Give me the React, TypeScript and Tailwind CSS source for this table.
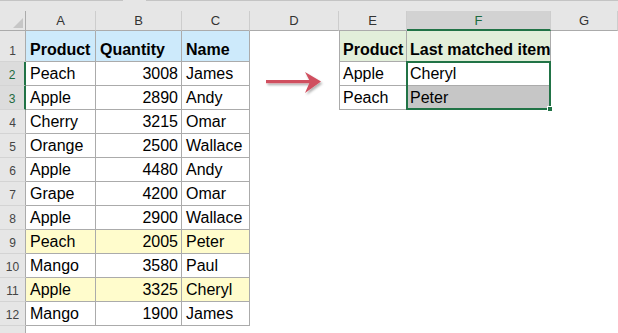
const rows: [string, number, string][] = [
  ["Peach", 3008, "James"],
  ["Apple", 2890, "Andy"],
  ["Cherry", 3215, "Omar"],
  ["Orange", 2500, "Wallace"],
  ["Apple", 4480, "Andy"],
  ["Grape", 4200, "Omar"],
  ["Apple", 2900, "Wallace"],
  ["Peach", 2005, "Peter"],
  ["Mango", 3580, "Paul"],
  ["Apple", 3325, "Cheryl"],
  ["Mango", 1900, "James"],
];

const lookup: [string, string][] = [
  ["Apple", "Cheryl"],
  ["Peach", "Peter"],
];

const cols = ["A", "B", "C", "D", "E", "F", "G"];

function Arrow() {
  return (
    <svg width="64" height="30" viewBox="0 0 64 30" className="absolute left-[12px] top-[6px] z-10 overflow-visible">
      <defs>
        <filter id="sh" x="-20%" y="-40%" width="150%" height="200%">
          <feDropShadow dx="1.5" dy="2" stdDeviation="1.2" floodColor="#000" floodOpacity="0.3" />
        </filter>
      </defs>
      <g filter="url(#sh)" fill="#d04f5f">
        <rect x="4" y="12" width="46" height="3.2" />
        <polygon points="43,4 59,13.6 43,25 48,13.6" />
      </g>
    </svg>
  );
}

function RowHead({ n, sel, h }: { n: number; sel?: boolean; h: string }) {
  return (
    <div
      className={`${h} flex items-end justify-center pb-[4px] text-[12px] leading-none border-b border-[#d4d4d4] ${
        sel ? "bg-[#dcdcdc] text-[#1e6b40] border-r-2 border-r-[#217346]" : "bg-[#e6e6e6] text-[#444] border-r border-r-[#ababab]"
      }`}
    >
      {n}
    </div>
  );
}

export default function App() {
  const cell = "flex items-end pb-[3.5px] leading-none text-[16px] text-black whitespace-nowrap";
  const tb = "border-r border-b border-[#ababab]";
  return (
    <div className="w-[618px] h-[333px] overflow-hidden bg-white font-['Liberation_Sans',Arial,sans-serif]">
      <div className="h-[11px] bg-[#e6e6e6] flex">
        <div className="w-[123px] border-t border-[#c4c4c4]" />
        <div className="w-[23px]" />
        <div className="flex-1 border-t border-[#c4c4c4]" />
      </div>
      <div className="grid grid-cols-[26px_70px_86px_68px_89px_68px_144px_67px]">
        {/* column headers */}
        <div className="h-[20px] bg-[#e6e6e6] border-r border-b border-[#ababab] relative">
          <div className="absolute right-[2px] bottom-[2px] w-0 h-0 border-l-[10px] border-l-transparent border-b-[10px] border-b-[#c6c6c6]" />
        </div>
        {cols.map((c) => (
          <div
            key={c}
            className={`h-[20px] flex items-center justify-center text-[13px] leading-none border-r border-[#cdcdcd] ${
              c === "F" ? "bg-[#d2d2d2] text-[#1e6b40] border-b-2 border-b-[#217346]" : "bg-[#e6e6e6] text-[#333] border-b border-b-[#ababab]"
            }`}
          >
            {c}
          </div>
        ))}

        {/* row 1 */}
        <RowHead n={1} h="h-[31px]" />
        <div className={`h-[31px] ${cell} pl-[4px] font-bold bg-[#cdeafb] ${tb}`}>Product</div>
        <div className={`h-[31px] ${cell} pl-[4px] font-bold bg-[#cdeafb] ${tb}`}>Quantity</div>
        <div className={`h-[31px] ${cell} pl-[4px] font-bold bg-[#cdeafb] ${tb}`}>Name</div>
        <div className="h-[31px]" />
        <div className={`h-[31px] ${cell} pl-[3px] font-bold bg-[#e2efda] border-l border-[#ababab] ${tb}`}>Product</div>
        <div className={`h-[31px] ${cell} pl-[3px] font-bold bg-[#e2efda] ${tb}`}>Last matched item</div>
        <div className="h-[31px]" />

        {rows.map((r, i) => {
          const n = i + 2;
          const hl = n === 9 || n === 11 ? "bg-[#fffccc]" : "bg-white";
          const lk = lookup[i];
          return [
            <RowHead key={`h${n}`} n={n} h="h-[24px]" sel={n === 2 || n === 3} />,
            <div key={`a${n}`} className={`h-[24px] ${cell} pl-[4px] ${hl} ${tb}`}>{r[0]}</div>,
            <div key={`b${n}`} className={`h-[24px] ${cell} justify-end pr-[3px] ${hl} ${tb}`}>{r[1]}</div>,
            <div key={`c${n}`} className={`h-[24px] ${cell} pl-[4px] ${hl} ${tb}`}>{r[2]}</div>,
            <div key={`d${n}`} className="h-[24px] relative">{n === 2 && <Arrow />}</div>,
            lk ? (
              <div key={`e${n}`} className={`h-[24px] ${cell} pl-[3px] border-l border-[#ababab] ${tb}`}>{lk[0]}</div>
            ) : (
              <div key={`e${n}`} className="h-[24px]" />
            ),
            lk ? (
              <div key={`f${n}`} className={`h-[24px] ${cell} pl-[3px] relative ${n === 3 ? "bg-[#c6c6c6]" : "bg-white"} ${tb}`}>
                {lk[1]}
                {n === 2 && (
                  <div className="absolute -left-[1px] -top-[1px] w-[145px] h-[49px] border-2 border-[#217346] z-10">
                    <div className="absolute -right-[4px] -bottom-[4px] w-[6px] h-[6px] bg-[#217346] border border-white" />
                  </div>
                )}
              </div>
            ) : (
              <div key={`f${n}`} className="h-[24px]" />
            ),
            <div key={`g${n}`} className="h-[24px]" />,
          ];
        })}

        <RowHead n={13} h="h-[24px]" />
        <div className="col-span-7 h-[24px]" />
      </div>
    </div>
  );
}
